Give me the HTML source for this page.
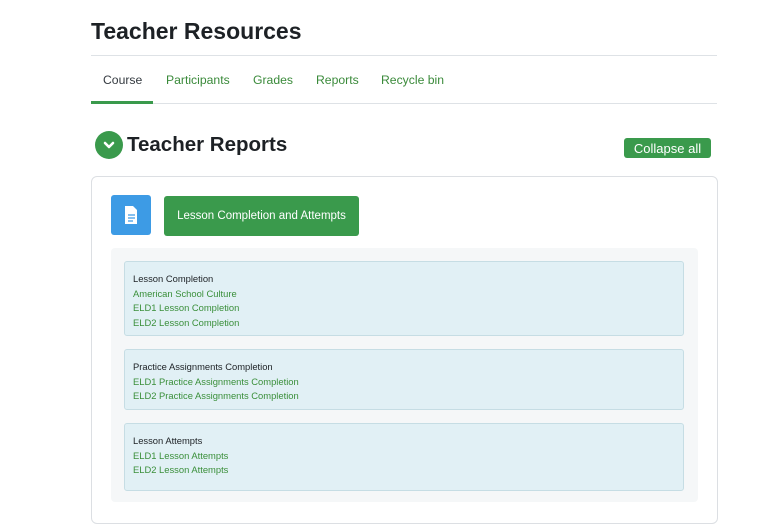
<!DOCTYPE html>
<html><head><style>
body{margin:0;width:757px;height:529px;background:#fff;font-family:"Liberation Sans",sans-serif;position:relative;overflow:hidden}
.a{position:absolute}
h1{position:absolute;left:91px;top:18px;margin:0;font-size:23px;font-weight:bold;color:#1d2125}
.tab{position:absolute;top:73px;font-size:12.2px;color:#3a8a3a}
.box{position:absolute;left:124px;width:560px;background:#e1f0f5;border:1px solid #c6dde4;border-radius:3px;font-size:9.4px;line-height:14.5px;padding:9px 8px;box-sizing:border-box}
.box div{color:#3a8f3a}
.box div:first-child{color:#1d2125}
</style></head><body>
<h1>Teacher Resources</h1>
<div class="a" style="left:91px;top:55px;width:626px;height:1px;background:#dee2e6"></div>
<div class="tab" style="left:103px;color:#343a40">Course</div>
<div class="tab" style="left:166px">Participants</div>
<div class="tab" style="left:253px">Grades</div>
<div class="tab" style="left:316px">Reports</div>
<div class="tab" style="left:381px">Recycle bin</div>
<div class="a" style="left:91px;top:103px;width:626px;height:1px;background:#dee2e6"></div>
<div class="a" style="left:91px;top:101px;width:62px;height:3px;background:#3a9a4c"></div>
<div class="a" style="left:95px;top:131px;width:28px;height:28px;border-radius:50%;background:#3a9a4c"></div>
<svg class="a" style="left:101px;top:137px" width="16" height="16"><path d="M4 6l4 4 4-4" stroke="#fff" stroke-width="2.6" fill="none" stroke-linecap="round" stroke-linejoin="round"/></svg>
<div class="a" style="left:127px;top:133px;font-size:20.5px;font-weight:bold;color:#1d2125">Teacher Reports</div>
<div class="a" style="left:624px;top:138px;width:87px;height:20px;background:#3a9a4c;border-radius:3px;color:#fff;font-size:13px;line-height:21px;text-align:center">Collapse all</div>
<div class="a" style="left:91px;top:176px;width:627px;height:348px;border:1px solid #dcdfe3;border-radius:6px;box-sizing:border-box"></div>
<div class="a" style="left:111px;top:195px;width:40px;height:40px;background:#3d9be5;border-radius:3px"></div>
<svg class="a" style="left:121px;top:205px" width="20" height="20"><path d="M4 1h8l4 4v14H4z" fill="#fff"/><path d="M7 10h7M7 13h7M7 16h5" stroke="#3d9be5" stroke-width="1.2"/></svg>
<div class="a" style="left:164px;top:196px;width:195px;height:40px;background:#3a9a4c;border-radius:3px;color:#fff;font-size:11.5px;line-height:41px;text-align:center">Lesson Completion and Attempts</div>
<div class="a" style="left:111px;top:248px;width:587px;height:254px;background:#f5f7f8;border-radius:4px"></div>
<div class="box" style="top:261px;height:75px;padding-top:10px"><div>Lesson Completion</div><div>American School Culture</div><div>ELD1 Lesson Completion</div><div>ELD2 Lesson Completion</div></div>
<div class="box" style="top:349px;height:61px;padding-top:10px"><div>Practice Assignments Completion</div><div>ELD1 Practice Assignments Completion</div><div>ELD2 Practice Assignments Completion</div></div>
<div class="box" style="top:423px;height:68px;padding-top:10px"><div>Lesson Attempts</div><div>ELD1 Lesson Attempts</div><div>ELD2 Lesson Attempts</div></div>
</body></html>
